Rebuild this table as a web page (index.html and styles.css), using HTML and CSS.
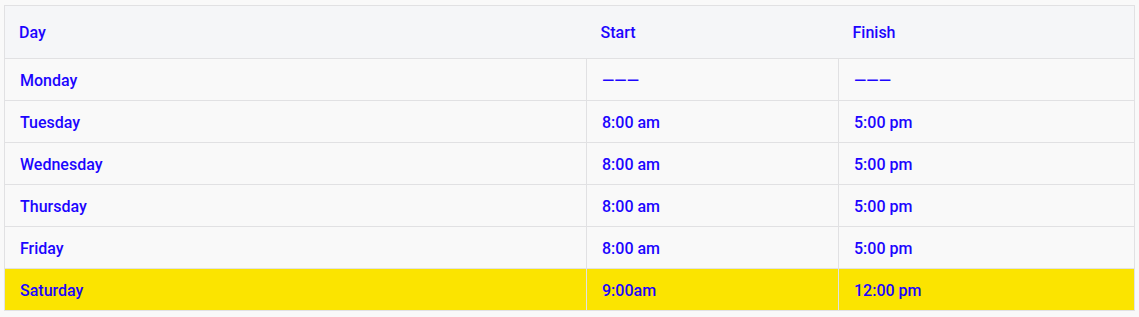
FILE: index.html
```html
<!DOCTYPE html>
<html>
<head>
<meta charset="utf-8">
<link rel="stylesheet" href="styles.css">
</head>
<body>
<table class="hours">
  <colgroup>
    <col class="c-day"><col class="c-start"><col class="c-finish">
  </colgroup>
  <thead>
    <tr><th>Day</th><th>Start</th><th>Finish</th></tr>
  </thead>
  <tbody>
    <tr><td>Monday</td><td>———</td><td>———</td></tr>
    <tr><td>Tuesday</td><td>8:00 am</td><td>5:00 pm</td></tr>
    <tr><td>Wednesday</td><td>8:00 am</td><td>5:00 pm</td></tr>
    <tr><td>Thursday</td><td>8:00 am</td><td>5:00 pm</td></tr>
    <tr><td>Friday</td><td>8:00 am</td><td>5:00 pm</td></tr>
    <tr class="today"><td>Saturday</td><td>9:00am</td><td>12:00 pm</td></tr>
  </tbody>
</table>
</body>
</html>
```
FILE: styles.css
```css
html, body {
  margin: 0;
  background: #f9f9f9;
}
body {
  padding: 5px 5px 0 4px;
  font-family: Roboto, "Liberation Sans", sans-serif;
  color: #1c05ff;
}
.hours {
  width: 1130px;
  border-collapse: collapse;
  border: 1px solid #e1e1e3;
  table-layout: fixed;
}
.c-day { width: 582px; }
.c-start { width: 252px; }
.c-finish { width: 296px; }
.hours th {
  background: #f5f6f8;
  height: 52px;
  padding: 0 0 0 14px;
  text-align: left;
  font-size: 16px;
  font-weight: 500;
  border-bottom: 1px solid #e1e1e3;
}
.hours td {
  height: 40px;
  padding: 1px 0 0 15px;
  font-size: 16px;
  font-weight: 500;
  border: 1px solid #e1e1e3;
}
.hours tr.today td {
  background: #fbe400;
}
```
